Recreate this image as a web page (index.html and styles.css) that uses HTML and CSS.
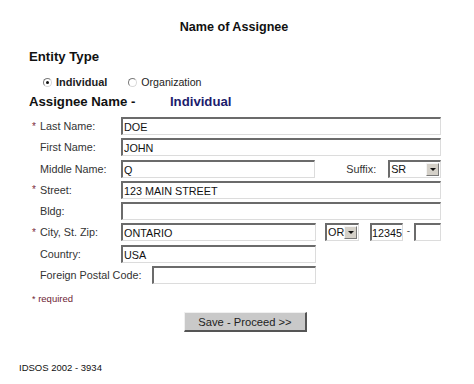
FILE: index.html
```html
<!DOCTYPE html>
<html lang="en">
<head>
    <meta charset="UTF-8" />
    <title>Name of Assignee</title>
    <link rel="stylesheet" href="styles.css">
</head>
<body>
<div class="page">

    <h1 class="title">Name of Assignee</h1>

    <h2 class="section-head">Entity Type</h2>

    <div class="radio-row">
        <label class="radio-item bold"><input type="radio" name="entity" checked> Individual</label>
        <label class="radio-item"><input type="radio" name="entity"> Organization</label>
    </div>

    <h2 class="section-head assignee">Assignee Name - <span class="entity-name">Individual</span></h2>

    <form class="form" action="#" method="post">
        <div class="lbl req">Last Name:</div>
        <div class="cell"><input class="txt full" type="text" value="DOE"></div>

        <div class="lbl">First Name:</div>
        <div class="cell"><input class="txt full" type="text" value="JOHN"></div>

        <div class="lbl">Middle Name:</div>
        <div class="cell">
            <input class="txt mid" type="text" value="Q">
            <span class="suffix-lbl">Suffix:</span>
            <span class="combo suffix"><span class="combo-val">SR</span><span class="combo-btn"></span></span>
        </div>

        <div class="lbl req">Street:</div>
        <div class="cell"><input class="txt full" type="text" value="123 MAIN STREET"></div>

        <div class="lbl">Bldg:</div>
        <div class="cell"><input class="txt full" type="text" value=""></div>

        <div class="lbl req">City, St. Zip:</div>
        <div class="cell">
            <input class="txt mid" type="text" value="ONTARIO">
            <span class="combo state"><span class="combo-val">OR</span><span class="combo-btn"></span></span>
            <input class="txt zip" type="text" value="12345">
            <span class="dash">-</span>
            <input class="txt zip4" type="text" value="">
        </div>

        <div class="lbl">Country:</div>
        <div class="cell"><input class="txt mid" type="text" value="USA"></div>

        <div class="lbl nowrap">Foreign Postal Code:</div>
        <div class="cell postal"><input class="txt postal-input" type="text" value=""></div>
    </form>

    <p class="required-note"><span class="star">*</span> required</p>

    <button type="button" class="save-btn">Save - Proceed &gt;&gt;</button>

    <p class="footer-id">IDSOS 2002 - 3934</p>
</div>
</body>
</html>
```

FILE: styles.css
```css
body {
    margin: 0;
    font-family: "Liberation Sans", Arial, sans-serif;
    color: #222;
    background: #fff;
}

.page {
    width: 474px;
    padding-top: 20px;
}

.title {
    width: 468px;
    margin: 0;
    font-size: 12.6px;
    line-height: 14px;
    font-weight: bold;
    text-align: center;
    color: #111;
}

.section-head {
    margin: 15px 0 0 29px;
    font-size: 13.2px;
    line-height: 16px;
    font-weight: bold;
    color: #111;
}

.assignee {
    margin-top: 5px;
}

.entity-name {
    margin-left: 31px;
    color: #1c1c6c;
}

.radio-row {
    display: flex;
    align-items: center;
    margin: 10px 0 0 43px;
    height: 14px;
    font-size: 10.6px;
}

.radio-item {
    display: flex;
    align-items: center;
    gap: 4px;
    margin-right: 21px;
}

.bold {
    font-weight: bold;
    font-size: 11px;
}

.radio-item input {
    appearance: none;
    width: 9px;
    height: 9px;
    margin: 0;
    border: 1px solid #7a7a7a;
    border-right-color: #d8d8d8;
    border-bottom-color: #d8d8d8;
    border-radius: 50%;
    background: #fff;
    box-sizing: border-box;
    position: relative;
}

.radio-item input:checked::after {
    content: "";
    position: absolute;
    left: 2px;
    top: 2px;
    width: 3px;
    height: 3px;
    border-radius: 50%;
    background: #111;
}

/* form rows */
.form {
    display: grid;
    grid-template-columns: 89px 320px;
    grid-auto-rows: 21.3px;
    margin: 7px 0 0 32px;
}

.lbl {
    height: 18px;
    display: flex;
    align-items: center;
    padding-left: 8px;
    font-size: 10.8px;
    color: #333;
}

.lbl.req {
    padding-left: 0;
}

.lbl.req::before {
    content: "*";
    width: 8px;
    color: #7d2c3c;
    font-size: 10px;
}

.nowrap {
    white-space: nowrap;
}

.cell {
    display: flex;
    align-items: flex-start;
}

.txt {
    height: 18px;
    margin: 0;
    padding: 1px 1px 0;
    box-sizing: border-box;
    border-top: 2px solid #6b6b6b;
    border-left: 2px solid #6b6b6b;
    border-right: 1px solid #dcdcdc;
    border-bottom: 1px solid #dcdcdc;
    font-family: "Liberation Sans", Arial, sans-serif;
    font-size: 10.8px;
    color: #111;
    background: #fff;
}

.full {
    width: 320px;
}

.mid {
    width: 195px;
}

.suffix-lbl {
    margin-left: 31px;
    height: 18px;
    line-height: 18px;
    font-size: 10.8px;
    color: #333;
}

.combo {
    position: relative;
    display: block;
    height: 18px;
    box-sizing: border-box;
    border-top: 2px solid #6b6b6b;
    border-left: 2px solid #6b6b6b;
    border-right: 1px solid #dcdcdc;
    border-bottom: 1px solid #dcdcdc;
    background: #fff;
    font-size: 10.8px;
    color: #111;
}

.combo-val {
    display: block;
    padding-left: 1px;
    line-height: 15px;
}

.combo-btn {
    position: absolute;
    right: 1px;
    top: 1px;
    width: 13px;
    height: 13px;
    box-sizing: border-box;
    background: #d4d0c8;
    border-top: 1px solid #f4f4f4;
    border-left: 1px solid #f4f4f4;
    border-right: 1px solid #777;
    border-bottom: 1px solid #777;
}

.combo-btn::after {
    content: "";
    position: absolute;
    left: 3px;
    top: 4px;
    border-left: 3px solid transparent;
    border-right: 3px solid transparent;
    border-top: 3px solid #111;
}

.suffix {
    width: 53px;
    margin-left: 12px;
}

.state {
    width: 34px;
    margin-left: 9px;
}

.zip {
    width: 33px;
    margin-left: 11px;
    padding: 1px 0 0;
}

.dash {
    width: 11px;
    height: 18px;
    text-align: center;
    font-size: 10px;
    color: #555;
    line-height: 16px;
}

.zip4 {
    width: 27px;
}

.postal {
    padding-left: 31px;
}

.postal-input {
    width: 164px;
}

.required-note {
    margin: 6px 0 0 32px;
    font-size: 9.5px;
    line-height: 12px;
    color: #6e2434;
}

.star {
    font-size: 9px;
}

.save-btn {
    display: block;
    width: 123px;
    height: 20px;
    margin: 7px 0 0 184px;
    padding: 0;
    box-sizing: border-box;
    background: #c9c9c9;
    border-top: 1px solid #f0f0f0;
    border-left: 1px solid #f0f0f0;
    border-right: 2px solid #555;
    border-bottom: 2px solid #555;
    font-family: "Liberation Sans", Arial, sans-serif;
    font-size: 11.2px;
    color: #222;
}

.footer-id {
    margin: 30px 0 0 19px;
    font-size: 9.5px;
    line-height: 12px;
    color: #111;
}
```
